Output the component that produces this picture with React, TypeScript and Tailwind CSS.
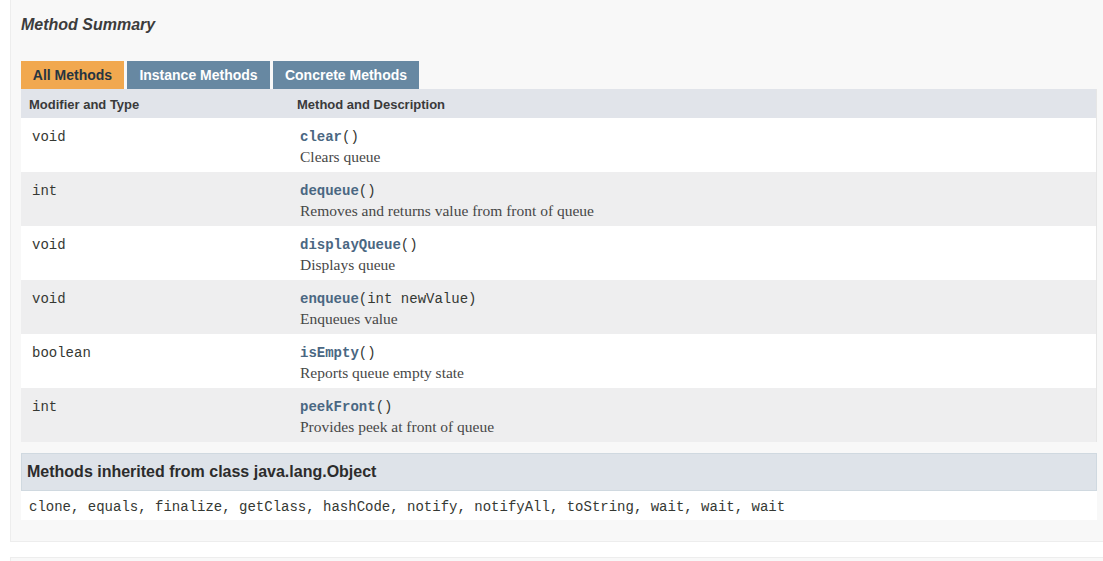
const rows = [
  { type: 'void', name: 'clear', params: '', desc: 'Clears queue' },
  { type: 'int', name: 'dequeue', params: '', desc: 'Removes and returns value from front of queue' },
  { type: 'void', name: 'displayQueue', params: '', desc: 'Displays queue' },
  { type: 'void', name: 'enqueue', params: 'int newValue', desc: 'Enqueues value' },
  { type: 'boolean', name: 'isEmpty', params: '', desc: 'Reports queue empty state' },
  { type: 'int', name: 'peekFront', params: '', desc: 'Provides peek at front of queue' },
];

const sans = "font-['Liberation_Sans',Arial,sans-serif]";
const mono = "font-['Liberation_Mono','Courier_New',monospace]";
const serif = "font-['Liberation_Serif',Georgia,serif]";

export default function App() {
  return (
    <div className={`w-[1103px] h-[561px] overflow-hidden bg-white text-[#353833] ${sans}`}>
      <div className="ml-[10px] w-[1110px] h-[542px] bg-[#f8f8f8] border-l border-b border-[#ededed] pl-[10px]">
        <h3 className="pt-[16px] h-[61px] text-[16px] leading-[18px] font-bold italic text-[#3c3c3c]">
          Method Summary
        </h3>

        <div className="flex gap-[3px] h-[28px] text-[14px] font-bold">
          <span className="w-[103px] flex items-center justify-center pt-[1px] bg-[#f1a84f] text-[#253441]">All Methods</span>
          <span className="w-[143px] flex items-center justify-center pt-[1px] bg-[#6788a2] text-white">Instance Methods</span>
          <span className="w-[146px] flex items-center justify-center pt-[1px] bg-[#6788a2] text-white">Concrete Methods</span>
        </div>

        <div className="w-[1076px] border-r border-[#e6e6e6]">
          <div className="flex h-[29px] items-center pt-[2px] bg-[#e1e4ea] text-[13px] font-bold text-[#3a3a3a]">
            <div className="w-[268px] pl-[8px]">Modifier and Type</div>
            <div className="pl-[8px]">Method and Description</div>
          </div>
          {rows.map((r, i) => (
            <div key={r.name} className={`flex h-[54px] ${i % 2 === 0 ? 'bg-white' : 'bg-[#eeeeef]'}`}>
              <div className={`w-[268px] pl-[11px] pt-[10px] text-[14px] leading-[18px] text-[#353833] ${mono}`}>{r.type}</div>
              <div className="pl-[11px] pt-[10px]">
                <div className={`text-[14px] leading-[18px] text-[#353833] ${mono}`}>
                  <span className="font-bold text-[#4a6782]">{r.name}</span>({r.params})
                </div>
                <div className={`mt-[2px] text-[15.5px] leading-[18px] text-[#474747] ${serif}`}>{r.desc}</div>
              </div>
            </div>
          ))}
        </div>

        <div className="mt-[11px] w-[1076px]">
          <div className="h-[38px] flex items-center bg-[#dee3e9] border border-[#d0d9e0] pl-[5px] text-[16px] font-bold text-[#2c2c2c]">
            Methods inherited from class java.lang.Object
          </div>
          <div className={`h-[29px] flex items-center pt-[3px] bg-white pl-[8px] text-[14px] text-[#353833] ${mono}`}>
            clone, equals, finalize, getClass, hashCode, notify, notifyAll, toString, wait, wait, wait
          </div>
        </div>
      </div>
      <div className="mt-[15px] ml-[10px] w-[1110px] h-[10px] bg-[#f8f8f8] border-l border-t border-[#ededed]" />
    </div>
  );
}
